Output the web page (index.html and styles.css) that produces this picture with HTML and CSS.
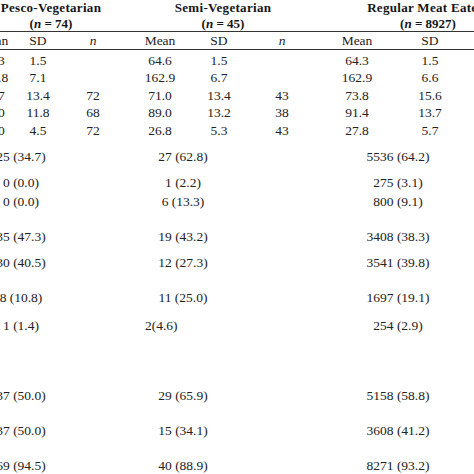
FILE: index.html
```html
<!DOCTYPE html>
<html lang="en">
<head>
<meta charset="utf-8">
<title>Table</title>
<link rel="stylesheet" href="styles.css">
</head>
<body>
<div class="table">
  <div class="cols head1">
    <div class="span3 grp-pesco">Pesco-Vegetarian</div>
    <div class="span3">Semi-Vegetarian</div>
    <div class="span3 grp-reg">Regular Meat Eaters</div>
  </div>
  <div class="cols head2">
    <div class="span3 grp-pesco">(<i>n</i> = 74)</div>
    <div class="span3">(<i>n</i> = 45)</div>
    <div class="span3 grp-reg">(<i>n</i> = 8927)</div>
  </div>
  <div class="cols colhead">
    <div>Mean</div><div>SD</div><div><i>n</i></div>
    <div>Mean</div><div>SD</div><div><i>n</i></div>
    <div>Mean</div><div>SD</div><div></div>
  </div>
  <div class="data">
    <div class="cols row">
      <div>64.3</div><div>1.5</div><div></div>
      <div>64.6</div><div>1.5</div><div></div>
      <div>64.3</div><div>1.5</div><div></div>
    </div>
    <div class="cols row">
      <div>162.8</div><div>7.1</div><div></div>
      <div>162.9</div><div>6.7</div><div></div>
      <div>162.9</div><div>6.6</div><div></div>
    </div>
    <div class="cols row">
      <div>72.7</div><div>13.4</div><div>72</div>
      <div>71.0</div><div>13.4</div><div>43</div>
      <div>73.8</div><div>15.6</div><div></div>
    </div>
    <div class="cols row">
      <div>89.0</div><div>11.8</div><div>68</div>
      <div>89.0</div><div>13.2</div><div>38</div>
      <div>91.4</div><div>13.7</div><div></div>
    </div>
    <div class="cols row">
      <div>27.0</div><div>4.5</div><div>72</div>
      <div>26.8</div><div>5.3</div><div>43</div>
      <div>27.8</div><div>5.7</div><div></div>
    </div>
  </div>

  <div class="cat cat--first"><div>25 (34.7)</div><div>27 (62.8)</div><div>5536 (64.2)</div></div>
  <div class="cat"><div>0 (0.0)</div><div>1 (2.2)</div><div>275 (3.1)</div></div>
  <div class="cat cat--tight"><div>0 (0.0)</div><div>6 (13.3)</div><div>800 (9.1)</div></div>
  <div class="cat cat--group"><div>35 (47.3)</div><div>19 (43.2)</div><div>3408 (38.3)</div></div>
  <div class="cat"><div>30 (40.5)</div><div>12 (27.3)</div><div>3541 (39.8)</div></div>
  <div class="cat cat--group"><div>8 (10.8)</div><div>11 (25.0)</div><div>1697 (19.1)</div></div>
  <div class="cat cat--loose"><div>1 (1.4)</div><div class="odd">2(4.6)</div><div>254 (2.9)</div></div>
  <div class="cat cat--section"><div>37 (50.0)</div><div>29 (65.9)</div><div>5158 (58.8)</div></div>
  <div class="cat cat--group"><div>37 (50.0)</div><div>15 (34.1)</div><div>3608 (41.2)</div></div>
  <div class="cat cat--group"><div>69 (94.5)</div><div>40 (88.9)</div><div>8271 (93.2)</div></div>
</div>
</body>
</html>
```
FILE: styles.css
```css
html, body {
  margin: 0;
  padding: 0;
  overflow: hidden;
  background: #ffffff;
}

body {
  width: 474px;
  height: 474px;
  font-family: "Liberation Serif", "Times New Roman", serif;
  font-size: 13.5px;
  color: #222222;
}

.table {
  margin-left: -37px;
  width: 568px;
}

.cols {
  display: grid;
  grid-template-columns: 60px 30px 80px 54px 64px 62px 88px 58px 72px;
  text-align: center;
  white-space: nowrap;
}

.span3 {
  grid-column: span 3;
}

.grp-pesco {
  padding-left: 6px;
}

.grp-reg {
  padding-left: 12px;
}

.head1 {
  height: 17px;
  line-height: 16px;
  font-weight: bold;
  font-size: 13px;
  color: #151515;
  letter-spacing: 0.3px;
}

.head2 {
  height: 14px;
  line-height: 14px;
  font-weight: bold;
  font-size: 13px;
  color: #151515;
  border-bottom: 1px solid #333333;
}

.colhead {
  height: 17px;
  line-height: 17px;
  border-bottom: 1px solid #333333;
}

.data {
  padding-top: 1.5px;
  padding-bottom: 1px;
}

.row {
  height: 17.5px;
  line-height: 17.5px;
}

.cat {
  display: grid;
  grid-template-columns: 116px 208px 222px;
  text-align: center;
  white-space: nowrap;
  height: 18px;
  line-height: 18px;
  margin-top: 8px;
}

.cat--first {
  margin-top: 8px;
}

.cat--tight {
  margin-top: 1px;
}

.cat--loose {
  margin-top: 10px;
}

.cat--group {
  margin-top: 17px;
}

.cat--section {
  margin-top: 52px;
}

.odd {
  text-align: left;
  padding-left: 66px;
}
```
